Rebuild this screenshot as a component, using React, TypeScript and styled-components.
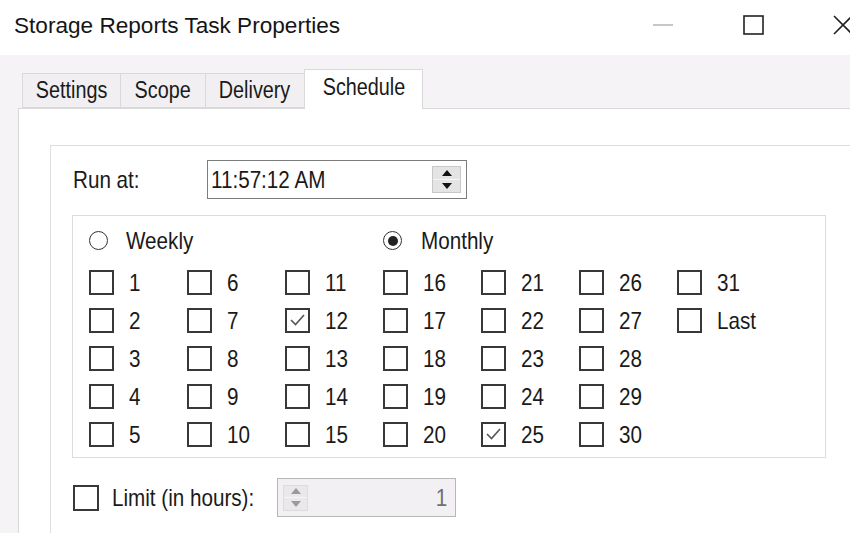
import React from 'react';
import styled, { createGlobalStyle } from 'styled-components';

const GlobalStyle = createGlobalStyle`
  html, body { margin: 0; padding: 0; width: 850px; height: 533px; overflow: hidden; background: #fff; }
  body { font-family: "Liberation Sans", Arial, sans-serif; color: #1c1c1c; }
  #root { width: 850px; height: 533px; }
  * { box-sizing: border-box; }
`;

/* Dialog text in the screenshot is drawn tall and narrow */
const Txt = styled.span<{ $size: number; $origin?: string; $color?: string }>`
  display: inline-block;
  font-size: ${p => p.$size}px;
  transform: scaleX(0.86);
  transform-origin: ${p => p.$origin ?? 'left'} center;
  white-space: nowrap;
  color: ${p => p.$color ?? '#1a1a1a'};
`;

const Window = styled.div`
  width: 850px;
  height: 533px;
  display: flex;
  flex-direction: column;
  background: #fff;
  overflow: hidden;
`;

const TitleBar = styled.div`
  height: 55px;
  flex: none;
  display: flex;
  align-items: center;
  padding-left: 14px;
`;

const Title = styled.div`
  flex: 1;
  font-size: 22.6px;
  white-space: nowrap;
  margin-top: -4px;
  color: #151515;
`;

const Controls = styled.div`
  display: flex;
  height: 100%;
  margin-right: -38px;
`;

const CtrlButton = styled.div`
  width: 90px;
  height: 100%;
  display: flex;
  align-items: center;
  justify-content: center;
  padding-bottom: 6px;
`;

const TabArea = styled.div`
  flex: 1;
  display: flex;
  flex-direction: column;
  background: #f5f3f6;
  padding: 14px 0 0 18px;
  min-height: 0;
`;

const TabStrip = styled.div`
  display: flex;
  align-items: flex-end;
  height: 39px;
  padding-left: 4px;
  flex: none;
  position: relative;
  z-index: 1;
`;

const Tab = styled.div<{ $active?: boolean; $w: number }>`
  width: ${p => p.$w}px;
  height: ${p => (p.$active ? '40px' : '35px')};
  margin-bottom: ${p => (p.$active ? '-1px' : '0')};
  border: 1px solid #d9d9d9;
  border-bottom: ${p => (p.$active ? 'none' : '1px solid #d9d9d9')};
  margin-right: -1px;
  background: ${p => (p.$active ? '#ffffff' : '#f1eff2')};
  display: flex;
  align-items: center;
  justify-content: center;
  padding-bottom: ${p => (p.$active ? '4px' : '1px')};
`;

const Panel = styled.div`
  flex: 1;
  background: #fff;
  border-top: 1px solid #d9d9d9;
  border-left: 1px solid #d9d9d9;
  padding: 36px 0 0 31px;
  overflow: hidden;
`;

const OuterGroup = styled.div`
  width: 830px;
  height: 420px;
  border: 1px solid #dedede;
  padding: 14px 0 0 22px;
`;

const RunRow = styled.div`
  display: flex;
  align-items: center;
  height: 39px;
`;

const Label = styled.div<{ $w: number }>`
  width: ${p => p.$w}px;
  flex: none;
  display: flex;
  align-items: center;
`;

const TimeBox = styled.div`
  width: 260px;
  height: 39px;
  border: 1px solid #7c7c7c;
  display: flex;
  align-items: center;
  padding-left: 3px;
`;

const Spinner = styled.div<{ $disabled?: boolean }>`
  width: ${p => (p.$disabled ? '25px' : '29px')};
  height: ${p => (p.$disabled ? '26px' : '27px')};
  display: flex;
  flex-direction: column;
  border: 1px solid ${p => (p.$disabled ? '#dcdcdc' : '#c8c8c8')};
  flex: none;
`;

const SpinHalf = styled.div<{ $disabled?: boolean }>`
  flex: 1;
  display: flex;
  align-items: center;
  justify-content: center;
  background: ${p => (p.$disabled ? '#ebe8eb' : '#e4e4e4')};
  & + & { border-top: 1px solid ${p => (p.$disabled ? '#f7f5f7' : '#f4f4f4')}; }
`;

const TimeValue = styled.div`
  flex: 1;
  display: flex;
  align-items: center;
`;

const TimeSpinWrap = styled.div`
  margin-right: 5px;
`;

const FreqBox = styled.div`
  margin-top: 16px;
  margin-left: -1px;
  width: 754px;
  border: 1px solid #dcdcdc;
  padding: 15px 0 10px 16px;
`;

const SevenCols = styled.div`
  display: grid;
  grid-template-columns: repeat(7, 98px);
`;

const RadioRow = styled(SevenCols)`
  grid-template-rows: 19px;
  margin-bottom: 20px;
`;

const CheckGrid = styled(SevenCols)`
  grid-template-rows: repeat(5, 25px);
  grid-auto-flow: column;
  row-gap: 13px;
`;

const Option = styled.label<{ $span?: number; $gap: number }>`
  display: flex;
  align-items: center;
  gap: ${p => p.$gap}px;
  grid-column: span ${p => p.$span ?? 1};
  min-height: 0;
`;

const RadioCircle = styled.span<{ $checked?: boolean }>`
  width: 19px;
  height: 19px;
  border-radius: 50%;
  border: 1.5px solid #333;
  display: flex;
  align-items: center;
  justify-content: center;
  flex: none;
  &::after {
    content: '';
    width: 10px;
    height: 10px;
    border-radius: 50%;
    background: ${p => (p.$checked ? '#222' : 'transparent')};
  }
`;

const Box = styled.span<{ $size: number }>`
  width: ${p => p.$size}px;
  height: ${p => p.$size}px;
  border: 2px solid #383838;
  flex: none;
  display: flex;
  align-items: center;
  justify-content: center;
  background: #fff;
`;

const LimitRow = styled.div`
  margin-top: 20px;
  display: flex;
  align-items: center;
  height: 39px;
`;

const LimitCheck = styled.div`
  display: flex;
  align-items: center;
  gap: 13px;
`;

const SpinBox = styled.div`
  width: 179px;
  height: 39px;
  border: 1px solid #b8b6b9;
  background: #f3f0f3;
  display: flex;
  align-items: center;
  padding-left: 5px;
  padding-right: 8px;
`;

const SpinValue = styled.div`
  flex: 1;
  display: flex;
  justify-content: flex-end;
`;

const Up = ({ c }: { c: string }) => (
  <svg width="10" height="6" viewBox="0 0 10 6"><path d="M0 6 L5 0 L10 6 Z" fill={c} /></svg>
);
const Down = ({ c }: { c: string }) => (
  <svg width="10" height="6" viewBox="0 0 10 6"><path d="M0 0 L10 0 L5 6 Z" fill={c} /></svg>
);

const Check = () => (
  <svg width="19" height="19" viewBox="0 0 19 19">
    <polyline points="3,9 7.5,13.5 16,4" fill="none" stroke="#555" strokeWidth="1.6" />
  </svg>
);

const CheckOption = ({ label, checked }: { label: string; checked?: boolean }) => (
  <Option $gap={15}>
    <Box $size={25}>{checked && <Check />}</Box>
    <Txt $size={24}>{label}</Txt>
  </Option>
);

const tabs = [
  { label: 'Settings', w: 99 },
  { label: 'Scope', w: 86 },
  { label: 'Delivery', w: 100 },
  { label: 'Schedule', w: 119, active: true },
];

const days: string[] = [...Array.from({ length: 31 }, (_, i) => String(i + 1)), 'Last'];
const checked = new Set(['12', '25']);

export default function App() {
  return (
    <Window>
      <GlobalStyle />
      <TitleBar>
        <Title>Storage Reports Task Properties</Title>
        <Controls>
          <CtrlButton>
            <svg width="20" height="2" viewBox="0 0 20 2"><line x1="0" y1="1" x2="20" y2="1" stroke="#b4b4b4" strokeWidth="1.5" /></svg>
          </CtrlButton>
          <CtrlButton>
            <svg width="21" height="20" viewBox="0 0 21 20"><rect x="1" y="1" width="19" height="18" fill="none" stroke="#222" strokeWidth="1.6" /></svg>
          </CtrlButton>
          <CtrlButton>
            <svg width="20" height="20" viewBox="0 0 20 20"><path d="M1 1 L19 19 M19 1 L1 19" stroke="#222" strokeWidth="1.6" /></svg>
          </CtrlButton>
        </Controls>
      </TitleBar>
      <TabArea>
        <TabStrip>
          {tabs.map(t => (
            <Tab key={t.label} $w={t.w} $active={t.active}>
              <Txt $size={23} $origin="center">{t.label}</Txt>
            </Tab>
          ))}
        </TabStrip>
        <Panel>
          <OuterGroup>
            <RunRow>
              <Label $w={134}><Txt $size={24}>Run at:</Txt></Label>
              <TimeBox>
                <TimeValue><Txt $size={24}>11:57:12 AM</Txt></TimeValue>
                <TimeSpinWrap>
                  <Spinner>
                    <SpinHalf><Up c="#111" /></SpinHalf>
                    <SpinHalf><Down c="#111" /></SpinHalf>
                  </Spinner>
                </TimeSpinWrap>
              </TimeBox>
            </RunRow>
            <FreqBox>
              <RadioRow>
                <Option $span={3} $gap={18}>
                  <RadioCircle />
                  <Txt $size={24}>Weekly</Txt>
                </Option>
                <Option $span={4} $gap={19}>
                  <RadioCircle $checked />
                  <Txt $size={24}>Monthly</Txt>
                </Option>
              </RadioRow>
              <CheckGrid>
                {days.map(d => (
                  <CheckOption key={d} label={d} checked={checked.has(d)} />
                ))}
              </CheckGrid>
            </FreqBox>
            <LimitRow>
              <LimitCheck>
                <Box $size={26} />
                <Label $w={165}><Txt $size={24}>Limit (in hours):</Txt></Label>
              </LimitCheck>
              <SpinBox>
                <Spinner $disabled>
                  <SpinHalf $disabled><Up c="#9a9a9a" /></SpinHalf>
                  <SpinHalf $disabled><Down c="#9a9a9a" /></SpinHalf>
                </Spinner>
                <SpinValue><Txt $size={24} $origin="right" $color="#707070">1</Txt></SpinValue>
              </SpinBox>
            </LimitRow>
          </OuterGroup>
        </Panel>
      </TabArea>
    </Window>
  );
}
